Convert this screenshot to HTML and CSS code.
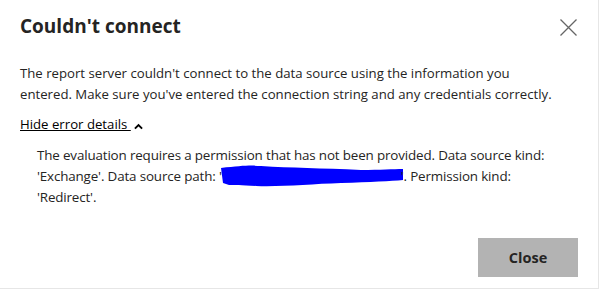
FILE: index.html
```html
<!DOCTYPE html>
<html>
<head>
<meta charset="utf-8">
<link rel="stylesheet" href="styles.css">
</head>
<body>
<div class="dialog">
  <div class="header">
    <h1 class="title">Couldn't connect</h1>
    <button class="x-btn" aria-label="Close">
      <svg width="17" height="17" viewBox="0 0 17 17"><path d="M0.5 0.5 L16.5 16.5 M16.5 0.5 L0.5 16.5" stroke="#666" stroke-width="1.3" fill="none"/></svg>
    </button>
  </div>
  <p class="message">The report server couldn't connect to the data source using the information you<br>entered. Make sure you've entered the connection string and any credentials correctly.</p>
  <div class="toggle"><span class="toggle-link">Hide error details </span><svg class="chev" width="9" height="7" viewBox="0 0 9 7"><path d="M0.9 5.6 L4.5 2 L8.1 5.6" stroke="#000" stroke-width="1.9" fill="none"/></svg></div>
  <p class="details">The evaluation requires a permission that has not been provided. Data source kind: 'Exchange'. Data source path: '<svg class="redact" width="182" height="22" viewBox="0 0 182 22"><path d="M0 3 C20 1 28 0 40 1 C70 3 100 3 140 5 C160 5 172 4 182 4 L182 15 C170 16 150 17 120 18 C90 19 60 22 35 21 C20 20 12 20 8 20 L2 18 Z" fill="#0000ff"/></svg>'. Permission kind: 'Redirect'.</p>
  <div class="footer">
    <button class="close-btn">Close</button>
  </div>
</div>
</body>
</html>
```
FILE: styles.css
```css
html, body {
  margin: 0;
  padding: 0;
  background: #ffffff;
}
body {
  font-family: "Open Sans", "Noto Sans", sans-serif;
  color: #252423;
}
.dialog {
  width: 599px;
  height: 289px;
  box-sizing: border-box;
  border-right: 1px solid #e6e6e6;
  border-bottom: 1px solid #e6e6e6;
  padding: 0 20px;
  display: flex;
  flex-direction: column;
}
.header {
  display: flex;
  justify-content: space-between;
  align-items: flex-start;
  padding-top: 12px;
}
.title {
  margin: 0;
  font-size: 19px;
  font-weight: 700;
  line-height: 28px;
  color: #252423;
}
.x-btn {
  border: 0;
  background: none;
  padding: 0;
  margin: 7px 1px 0 0;
  width: 17px;
  height: 17px;
  display: block;
}
.x-btn svg { display: block; }
.message {
  margin: 23px 0 0 0;
  font-size: 13.2px;
  line-height: 20.5px;
}
.toggle {
  margin-top: 10px;
  display: flex;
  align-items: center;
  font-size: 13.2px;
  line-height: 21px;
  color: #000;
}
.toggle-link {
  text-decoration: underline;
  white-space: pre;
}
.chev { margin-left: 3px; margin-top: 3px; }
.details {
  margin: 10px 20px 0 17px;
  font-size: 13.4px;
  line-height: 20px;
  letter-spacing: -0.15px;
}
.redact {
  vertical-align: -6px;
  margin: 0 -2px 0 -1px;
}
.footer {
  margin-top: auto;
  display: flex;
  justify-content: flex-end;
  padding-bottom: 11px;
}
.close-btn {
  width: 100px;
  height: 39px;
  border: 0;
  background: #b3b3b3;
  font-family: "Open Sans", "Noto Sans", sans-serif;
  font-weight: 700;
  font-size: 14.5px;
  color: #252423;
}
```
